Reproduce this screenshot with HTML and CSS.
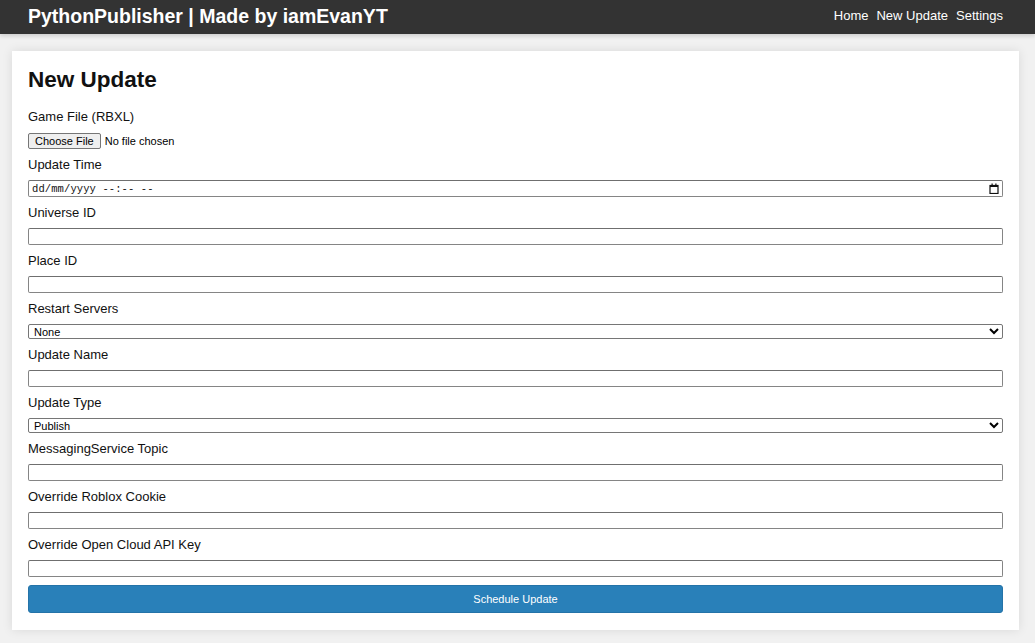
FILE: index.html
```html
<!DOCTYPE html>
<html lang="en">
<head>
    <meta charset="UTF-8">
    <meta name="viewport" content="width=device-width, initial-scale=1.0">
    <title>PythonPublisher - New Update</title>
    <link rel="stylesheet" href="styles.css">
</head>
<body>
    <header>
        <h1 class="brand">PythonPublisher | Made by iamEvanYT</h1>
        <nav>
            <a href="#">Home</a>
            <a href="#">New Update</a>
            <a href="#">Settings</a>
        </nav>
    </header>

    <main class="card">
        <h2>New Update</h2>
        <form onsubmit="event.preventDefault()">
            <label for="game-file">Game File (RBXL)</label>
            <div class="file-row">
                <label class="file-btn" for="game-file">Choose File</label>
                <span class="file-name">No file chosen</span>
                <input type="file" id="game-file" name="game-file" accept=".rbxl" class="hidden-file">
            </div>

            <label for="update-time">Update Time</label>
            <div class="date-box">
                <input type="text" id="update-time" name="update-time" class="text-input date-input" placeholder="dd/mm/yyyy --:-- --">
                <svg class="cal-icon" width="10" height="11" viewBox="0 0 10 11">
                    <rect x="1" y="2.5" width="8" height="8" fill="none" stroke="#111" stroke-width="1.2"/>
                    <rect x="1" y="2" width="8" height="2" fill="#111"/>
                    <rect x="2.5" y="0.5" width="1.2" height="2" fill="#111"/>
                    <rect x="6.3" y="0.5" width="1.2" height="2" fill="#111"/>
                </svg>
            </div>

            <label for="universe-id">Universe ID</label>
            <input type="text" id="universe-id" name="universe-id" class="text-input">

            <label for="place-id">Place ID</label>
            <input type="text" id="place-id" name="place-id" class="text-input">

            <label for="restart">Restart Servers</label>
            <select id="restart" name="restart" class="select-input">
                <option>None</option>
                <option>Soft Restart</option>
                <option>Hard Restart</option>
            </select>

            <label for="update-name">Update Name</label>
            <input type="text" id="update-name" name="update-name" class="text-input">

            <label for="update-type">Update Type</label>
            <select id="update-type" name="update-type" class="select-input">
                <option>Publish</option>
                <option>Save</option>
            </select>

            <label for="topic">MessagingService Topic</label>
            <input type="text" id="topic" name="topic" class="text-input">

            <label for="cookie">Override Roblox Cookie</label>
            <input type="text" id="cookie" name="cookie" class="text-input">

            <label for="api-key">Override Open Cloud API Key</label>
            <input type="text" id="api-key" name="api-key" class="text-input">

            <button type="submit" class="submit-btn">Schedule Update</button>
        </form>
    </main>
</body>
</html>
```

FILE: styles.css
```css
body {
    font-family: Arial, "Liberation Sans", sans-serif;
    margin: 0;
    background-color: #f1f1f1;
    color: #111;
}
header {
    background: #333;
    color: white;
    height: 34px;
    padding: 0 32px 0 28px;
    display: flex;
    align-items: center;
    justify-content: space-between;
    box-shadow: 0 2px 4px rgba(0, 0, 0, 0.15);
}
.brand {
    margin: 0;
    font-size: 19.5px;
    font-weight: bold;
    line-height: 24px;
    padding-bottom: 2px;
}
nav {
    display: flex;
    gap: 8px;
    padding-bottom: 3px;
}
nav a {
    color: white;
    text-decoration: none;
    font-size: 13px;
}
.card {
    display: block;
    background: white;
    margin: 17px 16px 13px 12px;
    padding: 15px 16px 17px 16px;
    box-shadow: 0 0 10px rgba(0, 0, 0, 0.1);
}
.card h2 {
    margin: 0 0 15px 0;
    font-size: 22.5px;
    line-height: 28px;
}
form {
    display: flex;
    flex-direction: column;
}
form > label {
    font-size: 13px;
    line-height: 16px;
    margin-bottom: 7px;
}
.file-row {
    display: flex;
    align-items: center;
    height: 17px;
    margin-bottom: 8px;
    font-size: 11px;
}
.file-btn {
    background: #efefef;
    border: 1px solid #767676;
    border-radius: 2px;
    padding: 0 6px;
    line-height: 14px;
    color: #000;
    cursor: pointer;
}
.file-name {
    margin-left: 4px;
    color: #000;
}
.hidden-file {
    display: none;
}
.text-input {
    display: block;
    box-sizing: border-box;
    height: 17px;
    width: 100%;
    margin: 0 0 8px 0;
    padding: 0 3px;
    border: 1px solid #858585;
    border-top-color: #6f6f6f;
    border-radius: 2px;
    font-family: Arial, "Liberation Sans", sans-serif;
    font-size: 11px;
    background: white;
}
.date-box {
    position: relative;
}
.date-input {
    font-family: "Liberation Mono", monospace;
    font-size: 10.5px;
    letter-spacing: 0.1px;
}
.date-input::placeholder {
    color: #111;
}
.cal-icon {
    position: absolute;
    right: 4px;
    top: 3px;
}
.select-input {
    box-sizing: border-box;
    height: 15px;
    width: 100%;
    margin: 0 0 8px 0;
    padding: 0 0 0 1px;
    border: 1px solid #767676;
    border-radius: 2px;
    font-family: Arial, "Liberation Sans", sans-serif;
    font-size: 11px;
    line-height: 13px;
    background: white;
    color: #000;
}
.submit-btn {
    margin-top: 0;
    height: 28px;
    width: 100%;
    background: #2980b9;
    color: white;
    border: 1px solid #2473a8;
    border-radius: 3px;
    font-family: Arial, "Liberation Sans", sans-serif;
    font-size: 11px;
    cursor: pointer;
}
.submit-btn:hover {
    opacity: 0.9;
}
```
